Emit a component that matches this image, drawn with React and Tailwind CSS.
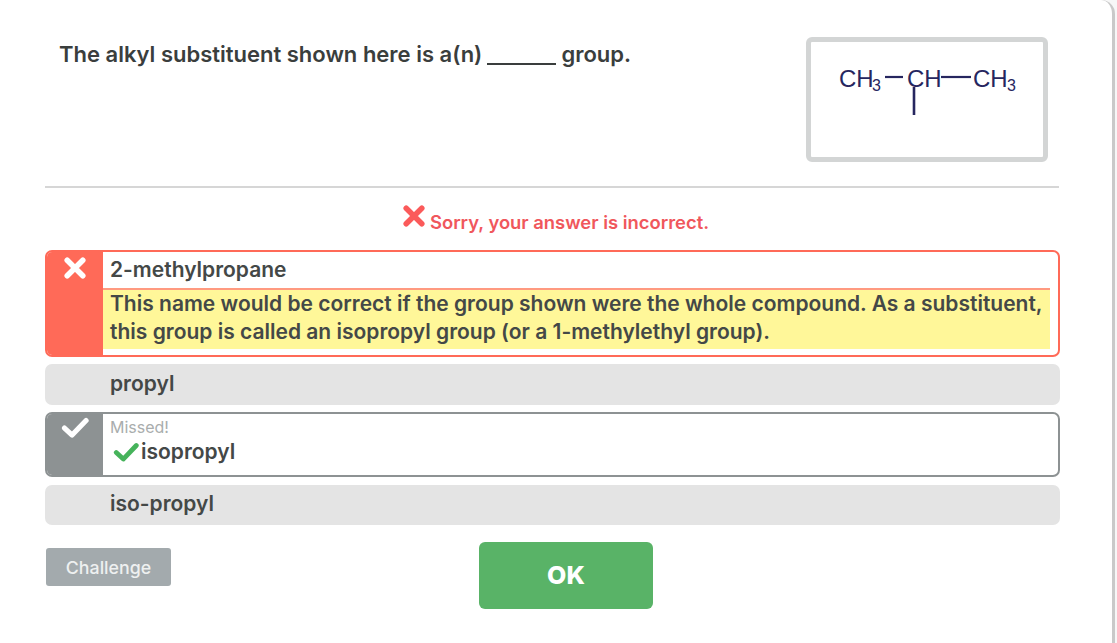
import React from "react";

const font = "font-['Inter','Lato',sans-serif]";

function Cross({ className }) {
  return (
    <svg viewBox="0 0 20 20" className={className}>
      <path d="M3.5 3.5 L16.5 16.5 M16.5 3.5 L3.5 16.5" stroke="currentColor" strokeWidth="4.6" strokeLinecap="round" fill="none" />
    </svg>
  );
}

function Check({ className }) {
  return (
    <svg viewBox="0 0 24 18" className={className}>
      <path d="M3 9.5 L9.5 15.5 L21.5 3" stroke="currentColor" strokeWidth="4.4" strokeLinecap="round" strokeLinejoin="round" fill="none" />
    </svg>
  );
}

function Molecule() {
  const text = { fontFamily: "'Liberation Sans', Arial, sans-serif", fontSize: 24, fill: "#26265f" };
  const sub = { ...text, fontSize: 16 };
  return (
    <svg width="232" height="115" viewBox="0 0 232 115">
      <text x="28" y="45" style={text}>CH</text>
      <text x="61" y="49" style={sub}>3</text>
      <path d="M74 35 H92" stroke="#26265f" strokeWidth="2.2" />
      <text x="96" y="45" style={text}>CH</text>
      <path d="M130 35 H160" stroke="#26265f" strokeWidth="2.2" />
      <text x="162" y="45" style={text}>CH</text>
      <text x="196" y="49" style={sub}>3</text>
      <path d="M103 45 V73" stroke="#26265f" strokeWidth="2.6" />
    </svg>
  );
}

export default function App() {
  return (
    <div className={`w-[1117px] h-[643px] overflow-hidden bg-[#f7f7f7] ${font} text-[#444847]`}>
      <div className="w-[1115px] h-[643px] bg-white border-r-[3px] border-[#c9c9c9] rounded-tr-[14px] pl-[45px] pr-[52px] flex flex-col">
        <div className="flex justify-between pt-[37px] pl-[14px] pr-[12px]">
          <p className="text-[22px] font-semibold leading-[34px] text-[#3a3e3d] whitespace-nowrap">
            The alkyl substituent shown here is a(n){" "}
            <span className="inline-block w-[69px] -ml-[1px] border-b-2 border-[#3a3e3d] h-[24px] align-baseline translate-y-[3px]"></span>{" "}
            group.
          </p>
          <div className="w-[242px] h-[125px] border-[5px] border-[#d3d5d5] rounded-[6px] bg-white">
            <Molecule />
          </div>
        </div>

        <div className="mt-[24px] mr-[1px] h-[2px] bg-[#d6d6d6]"></div>

        <div className="h-[62px] flex items-start justify-center pt-[16px] pl-[6px] gap-[4px] text-[#f0575c] font-semibold text-[18.4px] leading-[30px]">
          <Cross className="w-[24px] h-[24px] text-[#fb5a5a]" />
          <span className="mt-[3px]">Sorry, your answer is incorrect.</span>
        </div>

        <div className="flex flex-col text-[21px] leading-[28px] font-semibold">
          <div className="h-[107px] flex rounded-[7px] border-[2px] border-[#ff6a58] bg-white overflow-hidden">
            <div className="w-[56px] shrink-0 bg-[#ff6a58] flex justify-center pt-[4px] text-white">
              <Cross className="w-[24px] h-[24px]" />
            </div>
            <div className="flex-1 flex flex-col pr-[8px]">
              <div className="h-[36px] pl-[7px] pt-[4px] text-[#444847]">2-methylpropane</div>
              <div className="h-[61px] bg-[#fff799] border-t-2 border-[#ff9a80] pl-[7px] whitespace-nowrap">
                This name would be correct if the group shown were the whole compound. As a substituent,
                <br />
                this group is called an isopropyl group (or a 1-methylethyl group).
              </div>
            </div>
          </div>

          <div className="mt-[7px] h-[41px] rounded-[7px] bg-[#e4e4e4] pl-[65px] pt-[6px]">propyl</div>

          <div className="mt-[7px] h-[65px] flex rounded-[7px] border-[2px] border-[#8d9293] bg-white overflow-hidden">
            <div className="w-[56px] shrink-0 bg-[#8d9293] flex justify-center pt-[3px] text-white">
              <Check className="w-[28px] h-[21px]" />
            </div>
            <div className="flex-1 pl-[7px] pt-[3px]">
              <div className="text-[16px] leading-[20px] font-normal text-[#a9adad]">Missed!</div>
              <div className="flex items-center h-[28px] mt-[1px]">
                <Check className="w-[26px] h-[20px] ml-[3px] mr-[2px] text-[#46b35b]" />
                <span>isopropyl</span>
              </div>
            </div>
          </div>

          <div className="mt-[8px] h-[40px] rounded-[7px] bg-[#e4e4e4] pl-[65px] pt-[5px]">iso-propyl</div>
        </div>

        <div className="relative flex-1">
          <button className="mt-[23px] ml-[1px] w-[125px] h-[38px] pt-[2px] rounded-[3px] bg-[#a3aaad] text-[#eef0f0] text-[17.8px] font-medium">Challenge</button>
          <button className="absolute left-[434px] top-[17px] w-[174px] h-[67px] rounded-[6px] bg-[#59b367] text-white text-[25px] font-extrabold">OK</button>
        </div>
      </div>
    </div>
  );
}
